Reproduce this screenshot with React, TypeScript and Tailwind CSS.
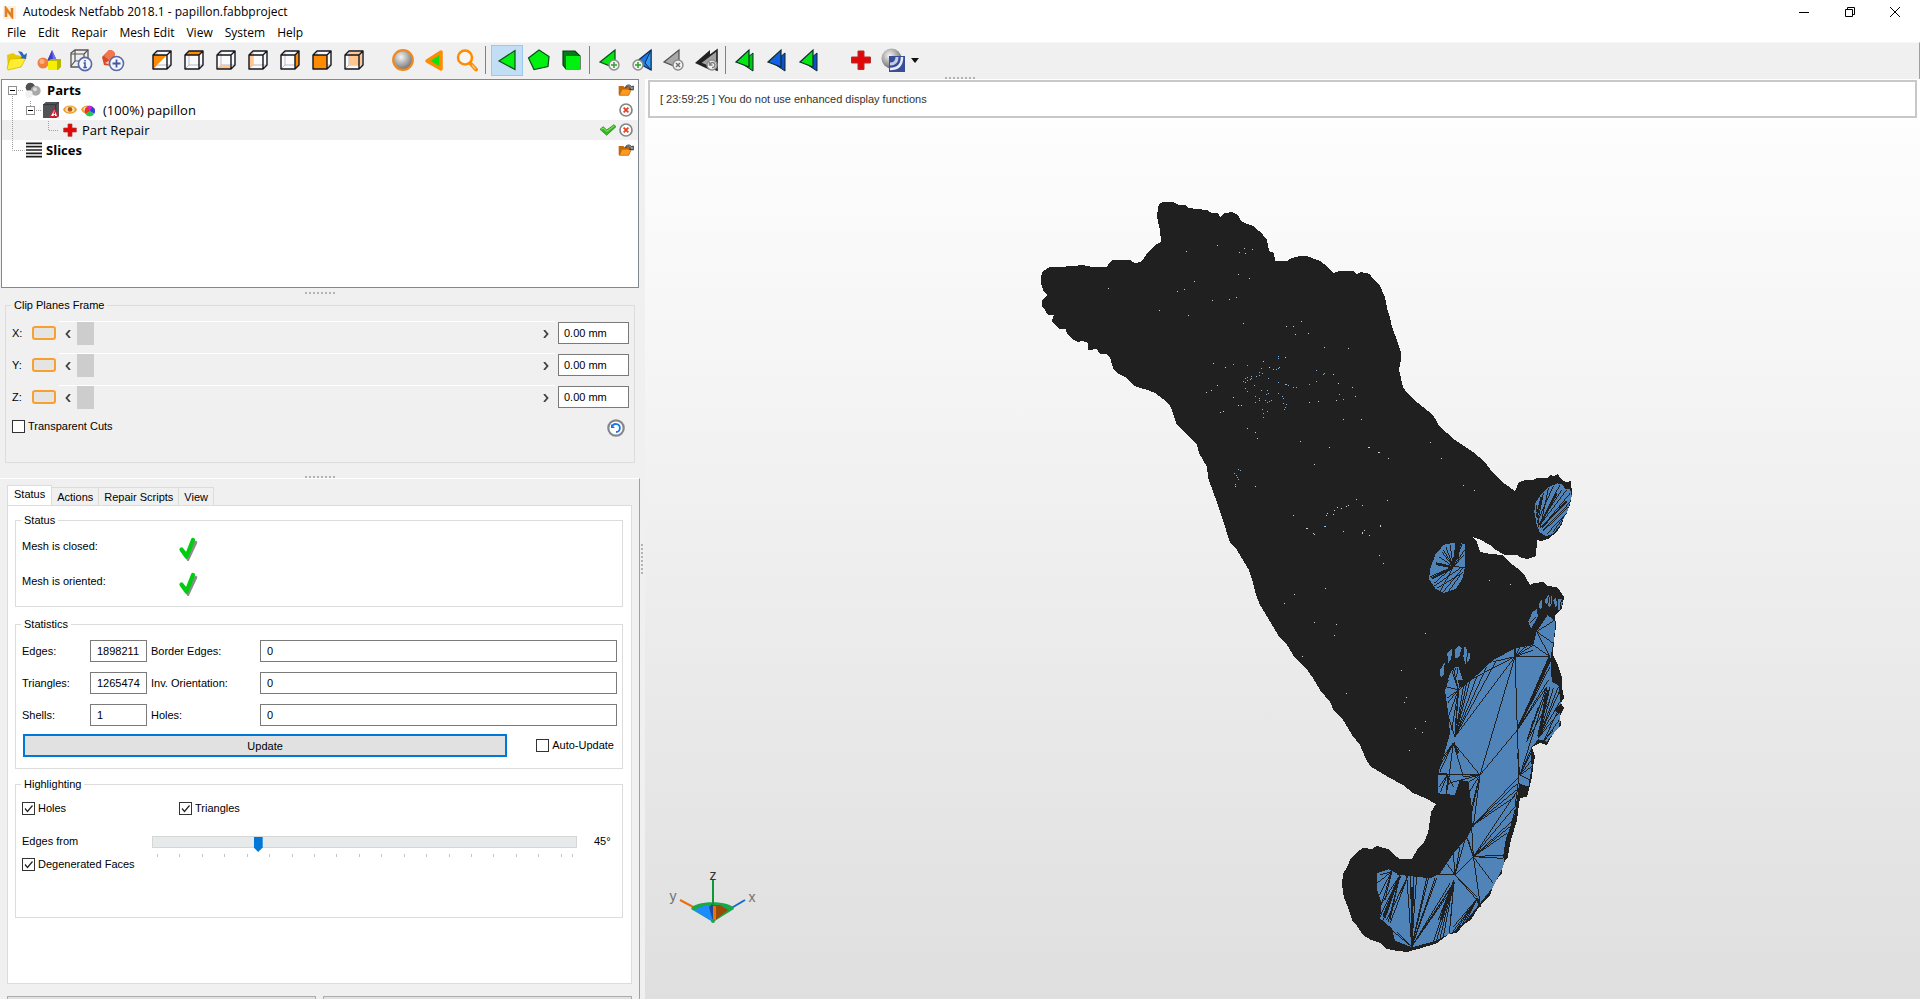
import { useState } from "react";
import type { ReactNode } from "react";

const ORANGE = "#ff8c00";
const INK = "#202020";

const menuItems = ["File", "Edit", "Repair", "Mesh Edit", "View", "System", "Help"];

const Icon = ({ children, className = "size-6" }: { children: ReactNode; className?: string }) => (
  <svg viewBox="0 0 24 24" className={className} fill="none" aria-hidden="true">
    {children}
  </svg>
);

/* ---------- toolbar icons ---------- */

const cubeFaces: Record<string, ReactNode> = {
  iso: <path d="M3 7h14L3 21z" fill={ORANGE} />,
  top: <path d="M3 7l4-4h14l-4 4z" fill={ORANGE} />,
  bottom: <path d="M3 21l4-4h10v4z" fill="#ffc78f" />,
  left: <path d="M3 7l4-3v13l-4 4z" fill="#ffc78f" />,
  right: <path d="M17 7l4-4v14l-4 4z" fill={ORANGE} />,
  front: <path d="M3 7h14v14H3z" fill={ORANGE} />,
  back: <path d="M7 4h13v13H7z" fill="#ffc78f" />,
};

const CubeIcon = ({ face }: { face: string }) => (
  <Icon>
    <path d="M3 7l4-4h14v14l-4 4H3z" fill="#fafafa" />
    <path d="M7 4v13h13M7 17l-4 4" stroke="#b9b9c4" strokeWidth="1" />
    {cubeFaces[face]}
    <path d="M3 7h14v14H3zM3 7l4-4h14v14l-4 4M17 7l4-4" stroke="#15151f" strokeWidth="1.4" strokeLinejoin="round" />
  </Icon>
);

const OpenIcon = () => (
  <Icon>
    <path d="M2 7l6-2 3 2 6 1v3l-2 8-12 2z" fill="#e8c800" />
    <path d="M2 20l3-9 16-1-5 9-13 3z" fill="#ffee30" stroke="#c9b000" strokeWidth=".7" />
    <path d="M13 3l4 1 2 3 3-2-1 6-6-1 2-1-2-3z" fill="#2c62c8" />
  </Icon>
);

const ShapesIcon = () => (
  <Icon>
    <path d="M15 2l5 11h-10z" fill="#3c3cc8" />
    <path d="M15 2l5 11h-4z" fill="#6f6ff0" />
    <circle cx="6" cy="15" r="5.5" fill="#f08040" />
    <circle cx="5" cy="13.5" r="2.5" fill="#ffb080" />
    <path d="M11 13l3-2h10v8l-3 3H11z" fill="#b8b400" />
    <path d="M11 13h9v9h-9z" fill="#f4f000" />
  </Icon>
);

const InfoIcon = () => (
  <Icon>
    <path d="M2 5l4-3h13v13l-3 4H2z" fill="#eeeeee" stroke="#555" strokeWidth="1.3" />
    <path d="M2 6h13v13M15 6l4-4M6 2v11l-4 5M6 13h12" stroke="#555" strokeWidth="1.2" />
    <circle cx="16" cy="16" r="6.6" fill="#f4f6ff" stroke="#5868a8" strokeWidth="1.6" />
    <path d="M16 12v1.6M14.5 15H16v4.5M14.3 19.5h3.6" stroke="#4656a0" strokeWidth="1.6" />
  </Icon>
);

const AddPartIcon = () => (
  <Icon>
    <path d="M1 9l7-7q5 0 6 4l-3 12-8-1z" fill="#d94a24" />
    <path d="M3 8l5-6q5 0 6 4l-5 7z" fill="#f0784c" />
    <path d="M4 15l5-3 3 6z" fill="#f8c0a0" />
    <circle cx="15.500" cy="15.500" r="7" fill="#f4f6ff" stroke="#5868a8" strokeWidth="1.6" />
    <path d="M15.500 11.500v8M11.500 15.500h8" stroke="#4656a0" strokeWidth="1.8" />
  </Icon>
);

const SphereIcon = () => (
  <Icon>
    <defs>
      <radialGradient id="ball" cx=".4" cy=".35" r=".7">
        <stop offset="0" stopColor="#f4f4f4" />
        <stop offset="1" stopColor="#686868" />
      </radialGradient>
    </defs>
    <circle cx="12" cy="12" r="9.800" fill="url(#ball)" stroke="#ef8a20" strokeWidth="2.200" />
  </Icon>
);

const OrangeTriangleIcon = () => (
  <Icon>
    <path d="M4 13L18 4v17z" fill="#10e010" stroke={ORANGE} strokeWidth="3.5" strokeLinejoin="round" />
  </Icon>
);

const MagnifierIcon = () => (
  <Icon>
    <circle cx="10" cy="9.500" r="7" fill="#f6f6f6" stroke={ORANGE} strokeWidth="2.500" />
    <path d="M15.500 15.500l5.500 6" stroke={ORANGE} strokeWidth="4" strokeLinecap="round" />
    <path d="M17 17l3.500 4" stroke="#ffc890" strokeWidth="1.200" />
  </Icon>
);

const TriangleIcon = () => (
  <Icon>
    <path d="M4 13L20 2.500v19z" fill="#00f010" stroke="#0b4d18" strokeWidth="1.200" />
  </Icon>
);

const PentagonIcon = () => (
  <Icon>
    <path d="M12 2l10 6.500-1 10L7 21.500 1.500 10z" fill="#00f010" stroke="#0b4d18" strokeWidth="1.200" />
  </Icon>
);

const SolidCubeIcon = () => (
  <Icon>
    <path d="M4 3l12 0 5 5v13H7L4 17z" fill="#067a18" stroke="#0b3d14" strokeWidth="1.200" />
    <path d="M7 8h14v13H7z" fill="#00f010" />
  </Icon>
);

const Badge = ({ x, color, mark }: { x: number; color: string; mark: string }) => (
  <>
    <circle cx={x} cy="17" r="5" fill="#f2f2f2" stroke="#8b8b8b" strokeWidth="1.400" />
    <path d={mark} stroke={color} strokeWidth="1.500" />
  </>
);

const AddTriangleIcon = () => (
  <Icon>
    <path d="M1 14L16 2v18z" fill="#00e810" stroke="#0b4d18" strokeWidth="1.200" />
    <Badge x={15} color="#30a030" mark="M15 14v6M12 17h6" />
  </Icon>
);

const AddBlueIcon = () => (
  <Icon>
    <path d="M5 14L20 2v20z" fill="#1a7ae0" stroke="#0a2a58" strokeWidth="1.200" />
    <path d="M20 2l-6 13 6 7z" fill="#2f9af0" stroke="#0a2a58" />
    <Badge x={7} color="#30a030" mark="M7 14v6M4 17h6" />
  </Icon>
);

const RemoveTriangleIcon = () => (
  <Icon>
    <path d="M1 14L16 2v18z" fill="#a8a8a8" stroke="#505050" strokeWidth="1.200" />
    <Badge x={15} color="#707070" mark="M13 15l4 4M17 15l-4 4" />
  </Icon>
);

const FlipIcon = () => (
  <Icon>
    <path d="M0 15L15 2v20z" fill="#222" />
    <path d="M5 15L22 2v20z" fill="#a0a0a0" stroke="#222" strokeWidth="1.600" />
    <Badge x={17} color="#808080" mark="M15 17a2.500 2.500 0 1 1 2 2.500M14.500 14v3h3" />
  </Icon>
);

const DoubleTriangleIcon = ({ front, back }: { front: string; back: string }) => (
  <Icon>
    <path d="M6 15L18 5v18z" fill={back} stroke="#123" strokeWidth="1" />
    <path d="M1 14L14 2v17z" fill={front} stroke="#0b2d28" strokeWidth="1.200" />
  </Icon>
);

const CrossIcon = ({ className = "size-6" }: { className?: string }) => (
  <Icon className={className}>
    <path d="M9 3h6v6h6.500v6H15v6.500H9V15H2.500V9H9z" fill="#e00808" stroke="#b03030" strokeWidth="1" />
  </Icon>
);

const DisplayIcon = () => (
  <Icon>
    <circle cx="10.500" cy="10.500" r="10" fill="url(#ball)" />
    <path d="M8 8h16v16H8z" fill="#3a4e98" />
    <path d="M9 21c8 0 12-4 12-12" stroke="#e6ecf8" strokeWidth="2.500" />
    <path d="M9 16c4 0 7-2 7-7" stroke="#c4cee8" strokeWidth="3" />
  </Icon>
);

/* ---------- tree icons ---------- */

const PartsIcon = () => (
  <Icon className="size-4">
    <circle cx="8" cy="8" r="7" fill="#505050" />
    <circle cx="16" cy="13" r="7.500" fill="#a8a8a8" />
    <circle cx="6" cy="18" r="5.500" fill="#f0f0f0" />
    <circle cx="15" cy="11" r="3" fill="#dcdcdc" />
  </Icon>
);

const PartIcon = () => (
  <Icon className="size-4">
    <path d="M0 4l4-4h20v20l-4 4H0z" fill="#505458" />
    <path d="M0 4h19v20M19 4l5-4" stroke="#33363a" strokeWidth="1.500" />
    <path d="M17 8l7 15H9z" fill="#d02030" />
    <path d="M17 12l4 9h-9z" fill="#fff" />
    <path d="M17 14v4M17 19v2" stroke="#d02030" strokeWidth="2" />
  </Icon>
);

const EyeIcon = ({ wheel = false }: { wheel?: boolean }) => (
  <Icon className="size-3.5">
    <path d="M0 11C4 2 20 2 24 11 20 21 4 21 0 11z" fill="#ef9a28" />
    <ellipse cx="12" cy="11" rx="8" ry="5" fill="#fbe0b0" />
    <circle cx="12" cy="11" r="4" fill="#b06010" />
    {wheel && (
      <>
        <path d="M15 14V5a9 9 0 0 1 7.800 13.500z" fill="#3040e8" />
        <path d="M15 14l7.800 4.500a9 9 0 0 1-15.600 0z" fill="#20c850" />
        <path d="M15 14L7.200 18.500A9 9 0 0 1 15 5z" fill="#f03020" />
        <path d="M15 14L10.500 6.200A9 9 0 0 1 19.500 6.200z" fill="#c828d0" />
      </>
    )}
  </Icon>
);

const SlicesIcon = () => (
  <Icon className="size-4">
    <path d="M0 2h24M0 7h24M0 12h24M0 17h24M0 22h24" stroke="#202020" strokeWidth="2.400" />
  </Icon>
);

const FolderIcon = () => (
  <Icon className="size-4">
    <path d="M1 6h7l2 2h8v3H6L3 19H1z" fill="#c06a10" />
    <path d="M2 20l4-9h14l-4 9z" fill="#ff9a20" stroke="#a85808" strokeWidth="1" />
    <path d="M11 8c2-5 8-4 9-1l3-1v6l-6-1 2-2c-2-2-5-2-7-1z" fill="#9d9d9d" stroke="#222" strokeWidth="1.200" />
  </Icon>
);

const RemoveIcon = () => (
  <Icon className="size-4">
    <circle cx="12" cy="12" r="9" fill="#fff" stroke="#848484" strokeWidth="2.500" />
    <path d="M8.500 8.500l7 7M15.500 8.500l-7 7" stroke="#e84020" strokeWidth="2.800" />
  </Icon>
);

const AcceptIcon = () => (
  <Icon className="size-4">
    <path d="M0 11l5-4 5 5L21 4l3 3-14 13z" fill="#35b820" stroke="#1f7a18" strokeWidth="1" />
    <path d="M2 11l3-2 5 5L21 6" stroke="#90e870" strokeWidth="1.500" />
  </Icon>
);

const StatusCheck = () => (
  <Icon className="mt-1.5 h-6 w-6">
    <path d="M6.500 14.500l4.500 7 7.500-16" stroke="#8c8c8c" strokeWidth="3.500" strokeLinecap="round" />
    <path d="M4.500 12.500l5 7L16 3" stroke="#00cc10" strokeWidth="4.200" strokeLinecap="round" strokeLinejoin="round" />
  </Icon>
);

/* ---------- small controls ---------- */

const Grip = ({ vertical = false }: { vertical?: boolean }) => (
  <span className={`flex gap-0.5 ${vertical ? "flex-col" : ""}`}>
    {[0, 1, 2, 3, 4, 5, 6, 7].map((dot) => (
      <i key={dot} className="size-0.5 bg-[#b4b4b4]" />
    ))}
  </span>
);

const Check = ({ label, checked = false }: { label: string; checked?: boolean }) => {
  const [on, setOn] = useState(checked);
  return (
    <label className="flex items-center gap-[3px] whitespace-nowrap">
      <span className="relative block size-[13px]">
        <input
          type="checkbox"
          checked={on}
          onChange={() => setOn(!on)}
          className="block size-[13px] appearance-none border border-[#333333] bg-white"
        />
        {on && (
          <svg viewBox="0 0 13 13" className="pointer-events-none absolute inset-0" fill="none">
            <path d="M3 6.500l2.500 3 5-6" stroke="#222" strokeWidth="1.200" />
          </svg>
        )}
      </span>
      {label}
    </label>
  );
};

const Group = ({ title, className, children }: { title: string; className: string; children: ReactNode }) => (
  <fieldset className={`border border-[#dcdcdc] ${className}`}>
    <legend className="ml-[5px] px-[3px] leading-[14px]">{title}</legend>
    {children}
  </fieldset>
);

const ToolButton = ({ label, active = false, children }: { label: string; active?: boolean; children: ReactNode }) => (
  <button
    aria-label={label}
    className={`flex h-[31px] w-8 items-center justify-center border ${
      active ? "border-[#99c9ef] bg-[#c2def4]" : "border-transparent"
    }`}
  >
    {children}
  </button>
);

const Separator = () => <span className="mx-0.5 h-7 w-px bg-[#808080]" />;

const Toolbar = () => (
  <div className="flex h-[37px] shrink-0 items-center border-t border-r border-t-[#f8f8f8] border-r-[#a0a0a0] bg-[#f0f0f0] pb-0.5 pl-px">
    <ToolButton label="Open"><OpenIcon /></ToolButton>
    <ToolButton label="Part library"><ShapesIcon /></ToolButton>
    <ToolButton label="Part info"><InfoIcon /></ToolButton>
    <ToolButton label="Add part"><AddPartIcon /></ToolButton>
    <div className="ml-[17px] flex">
      {Object.keys(cubeFaces).map((face) => (
        <ToolButton key={face} label={`View ${face}`}><CubeIcon face={face} /></ToolButton>
      ))}
    </div>
    <div className="ml-[17px] flex">
      <ToolButton label="Center"><SphereIcon /></ToolButton>
      <ToolButton label="Zoom to triangles"><OrangeTriangleIcon /></ToolButton>
      <ToolButton label="Zoom"><MagnifierIcon /></ToolButton>
    </div>
    <Separator />
    <div className="ml-[3px] flex">
      <ToolButton label="Select triangles" active><TriangleIcon /></ToolButton>
      <ToolButton label="Select surface"><PentagonIcon /></ToolButton>
      <ToolButton label="Select shell"><SolidCubeIcon /></ToolButton>
    </div>
    <Separator />
    <div className="ml-[3px] flex">
      <ToolButton label="Add triangle"><AddTriangleIcon /></ToolButton>
      <ToolButton label="Add node"><AddBlueIcon /></ToolButton>
      <ToolButton label="Remove triangle"><RemoveTriangleIcon /></ToolButton>
      <ToolButton label="Flip triangles"><FlipIcon /></ToolButton>
    </div>
    <Separator />
    <div className="ml-[3px] flex">
      <ToolButton label="Front faces"><DoubleTriangleIcon front="#00e810" back="#00c810" /></ToolButton>
      <ToolButton label="Back faces"><DoubleTriangleIcon front="#1060e8" back="#1050c8" /></ToolButton>
      <ToolButton label="Both faces"><DoubleTriangleIcon front="#00e810" back="#1050c8" /></ToolButton>
    </div>
    <div className="ml-[18px] flex items-center">
      <ToolButton label="Repair"><CrossIcon /></ToolButton>
      <ToolButton label="Display mode"><DisplayIcon /></ToolButton>
      <button aria-label="More display modes" className="ml-0.5">
        <svg viewBox="0 0 8 5" className="h-[5px] w-2"><path d="M0 0h8L4 5z" fill="#111" /></svg>
      </button>
    </div>
  </div>
);

/* ---------- left side ---------- */

const Expander = ({ label }: { label: string }) => (
  <button aria-label={label} className="flex size-[9px] items-center justify-center border border-[#909090] bg-white">
    <i className="h-px w-[5px] bg-black" />
  </button>
);

const IconButton = ({ label, children }: { label: string; children: ReactNode }) => (
  <button aria-label={label} className="block">{children}</button>
);

const Tree = () => (
  <div className="relative mr-px ml-px h-[209px] shrink-0 border border-[#828790] bg-white font-['Open_Sans','Noto_Sans',sans-serif] text-[13px]">
    <svg className="pointer-events-none absolute top-0 left-0 h-24 w-20" fill="none" stroke="#a0a0a0" strokeDasharray="1 1">
      <path d="M10.500 14v56.500h12M16 10.500h6M28.500 21v5M34 30.500h6M46.500 41v9.500h10" />
    </svg>
    <div className="flex h-5 items-center pr-1 pl-1.5">
      <Expander label="Collapse parts" />
      <span className="ml-2"><PartsIcon /></span>
      <span className="ml-1.5 flex-1 font-bold">Parts</span>
      <IconButton label="Open parts"><FolderIcon /></IconButton>
    </div>
    <div className="flex h-5 items-center pr-1 pl-6">
      <Expander label="Collapse papillon" />
      <span className="ml-2"><PartIcon /></span>
      <span className="ml-1"><EyeIcon /></span>
      <span className="ml-1"><EyeIcon wheel /></span>
      <span className="ml-2 flex-1">(100%) papillon</span>
      <IconButton label="Remove papillon"><RemoveIcon /></IconButton>
    </div>
    <div className="flex h-5 items-center bg-[#f0f0f0] pr-1 pl-[60px]">
      <CrossIcon className="size-4" />
      <span className="ml-1 flex-1">Part Repair</span>
      <IconButton label="Apply repair"><AcceptIcon /></IconButton>
      <span className="w-0.5" />
      <IconButton label="Cancel repair"><RemoveIcon /></IconButton>
    </div>
    <div className="flex h-5 items-center pr-1 pl-6">
      <SlicesIcon />
      <span className="ml-1 flex-1 font-bold">Slices</span>
      <IconButton label="Open slices"><FolderIcon /></IconButton>
    </div>
  </div>
);

const ClipRow = ({ axis }: { axis: string }) => {
  const [value, setValue] = useState(0);
  return (
    <div className="flex h-8 items-center">
      <span className="w-5">{axis}:</span>
      <button aria-label={`Clip ${axis}`} className="mr-[3px] h-3.5 w-6 rounded-[3px] border-2 border-[#f7a030] bg-[#e4e4e4]" />
      <div className="mr-[3px] flex h-6 flex-1 items-center border-t border-white">
        <button aria-label={`Decrease ${axis}`} className="flex w-[18px] justify-center">
          <svg viewBox="0 0 6 8" className="h-2 w-1.5" fill="none"><path d="M5 0L1.500 4 5 8" stroke="#404040" strokeWidth="1.800" /></svg>
        </button>
        <input
          type="range"
          aria-label={`${axis} plane`}
          value={value}
          onChange={(e) => setValue(Number(e.target.value))}
          className="h-[23px] min-w-0 flex-1 appearance-none bg-transparent [&::-webkit-slider-thumb]:h-[23px] [&::-webkit-slider-thumb]:w-[17px] [&::-webkit-slider-thumb]:appearance-none [&::-webkit-slider-thumb]:bg-[#cdcdcd]"
        />
        <button aria-label={`Increase ${axis}`} className="flex w-[17px] justify-center">
          <svg viewBox="0 0 6 8" className="h-2 w-1.5" fill="none"><path d="M1 0l3.500 4L1 8" stroke="#404040" strokeWidth="1.800" /></svg>
        </button>
      </div>
      <input
        aria-label={`${axis} position`}
        defaultValue="0.00 mm"
        className="h-[22px] w-[71px] border border-[#7a7a7a] bg-white px-[5px]"
      />
    </div>
  );
};

const ClipPlanes = () => (
  <Group title="Clip Planes Frame" className="mr-[5px] ml-[5px] h-[165px] shrink-0">
    <div className="pt-[5px] pr-[5px] pl-1.5">
      {["X", "Y", "Z"].map((axis) => (
        <ClipRow key={axis} axis={axis} />
      ))}
      <div className="flex h-[26px] items-center justify-between pr-1">
        <Check label="Transparent Cuts" />
        <button aria-label="Reset planes" className="mt-1">
          <svg viewBox="0 0 18 18" className="size-[18px]" fill="none">
            <circle cx="9" cy="9" r="7.700" fill="#fff" stroke="#85878c" strokeWidth="2.200" />
            <path d="M5 8a4 4 0 1 1 4 5" stroke="#1878e8" strokeWidth="1.800" />
            <path d="M4 5v4h4z" fill="#1878e8" />
          </svg>
        </button>
      </div>
    </div>
  </Group>
);

const stats = [
  ["Edges:", "1898211", "Border Edges:"],
  ["Triangles:", "1265474", "Inv. Orientation:"],
  ["Shells:", "1", "Holes:"],
];

const ticks = [0, 10, 20, 30, 40, 50, 60, 70, 80, 90, 100, 110, 120, 130, 140, 150, 160, 170, 180, 185];

const tabs = ["Status", "Actions", "Repair Scripts", "View"];

const RepairPanel = () => {
  const [angle, setAngle] = useState(45);
  return (
    <div className="flex min-h-0 flex-1 flex-col border-t border-r border-t-white border-r-[#a0a0a0] pt-1.5 pr-[7px] pl-[7px]">
      <div className="flex h-5 shrink-0 items-end" role="tablist">
        {tabs.map((tab, i) => (
          <button
            key={tab}
            role="tab"
            aria-selected={i === 0}
            className={
              i === 0
                ? "h-5 border border-b-0 border-[#dcdcdc] bg-white px-1.5 pb-1"
                : "h-[18px] border border-b-0 border-l-0 border-[#dcdcdc] px-[5px]"
            }
          >
            {tab}
          </button>
        ))}
      </div>
      <div className="h-[479px] shrink-0 border border-[#dcdcdc] bg-white pt-[7px] pr-2 pl-[7px]">
        <Group title="Status" className="h-[94px]">
          <div className="pt-px">
            {["Mesh is closed:", "Mesh is oriented:"].map((text) => (
              <div key={text} className="flex h-[35px] items-center pl-1.5">
                <span className="w-[155px]">{text}</span>
                <StatusCheck />
              </div>
            ))}
          </div>
        </Group>
        <Group title="Statistics" className="mt-[10px] h-[152px]">
          <div className="pt-1 pr-[5px] pl-1.5">
            {stats.map(([name, amount, other]) => (
              <div key={name} className="flex h-8 items-center">
                <label htmlFor={name} className="w-[68px]">{name}</label>
                <input id={name} readOnly value={amount} className="h-[22px] w-[57px] border border-[#7a7a7a] px-1.5" />
                <label htmlFor={other} className="ml-1 w-[109px]">{other}</label>
                <input id={other} readOnly value="0" className="h-[22px] min-w-0 flex-1 border border-[#7a7a7a] px-1.5" />
              </div>
            ))}
            <div className="mt-[3px] flex items-start justify-between pr-[3px]">
              <button className="mr-[29px] ml-px h-[23px] flex-1 border-2 border-[#0078d7] bg-[#e1e1e1]">Update</button>
              <div className="mt-1"><Check label="Auto-Update" /></div>
            </div>
          </div>
        </Group>
        <Group title="Highlighting" className="mt-2 h-[141px]">
          <div className="pt-[7px] pr-[5px] pl-1.5">
            <div className="flex h-5 items-center">
              <span className="w-[157px]"><Check label="Holes" checked /></span>
              <Check label="Triangles" checked />
            </div>
            <div className="mt-3 flex">
              <label htmlFor="angle" className="mt-1 w-[130px]">Edges from</label>
              <div className="min-w-0 flex-1 pt-1.5">
                <div className="flex h-3 items-start border border-[#d6d6d6] bg-[#e7eaea]">
                  <input
                    id="angle"
                    type="range"
                    min={0}
                    max={185}
                    value={angle}
                    onChange={(e) => setAngle(Number(e.target.value))}
                    className="h-[15px] w-full appearance-none bg-transparent [&::-webkit-slider-thumb]:h-[15px] [&::-webkit-slider-thumb]:w-[9px] [&::-webkit-slider-thumb]:appearance-none [&::-webkit-slider-thumb]:bg-[#0078d7] [&::-webkit-slider-thumb]:[clip-path:polygon(0_0,100%_0,100%_70%,50%_100%,0_70%)]"
                  />
                </div>
                <div className="relative mx-[5px] mt-1.5 h-[3px]">
                  {ticks.map((tick) => (
                    <i key={tick} className="absolute top-0 h-[3px] w-px bg-[#c4c4c4]" style={{ left: `${(tick / 185) * 100}%` }} />
                  ))}
                </div>
              </div>
              <output className="mt-1 w-10 pl-[17px]">{angle}°</output>
            </div>
            <div><Check label="Degenerated Faces" checked /></div>
          </div>
        </Group>
      </div>
      <div className="mt-3 flex shrink-0 gap-[7px]">
        <button aria-label="Automatic repair" className="h-6 flex-1 border border-[#adadad] bg-[#e1e1e1]" />
        <button aria-label="Apply" className="h-6 flex-1 border border-[#adadad] bg-[#e1e1e1]" />
      </div>
    </div>
  );
};

/* ---------- 3D view ---------- */

const outline =
  "1158,207 1160,203 1164,202 1173,202 1179,205 1185,205 1189,208 1196,209 1207,210 1212,213 1218,213 1220,217 1225,213 1232,212 1238,215 1241,221 1247,224 1253,226 1259,231 1263,235 1267,240 1269,251 1274,253 1275,261 1287,261 1292,258 1300,256 1307,256 1320,261 1327,266 1333,273 1340,271 1353,271 1357,274 1361,272 1370,274 1373,279 1380,286 1385,297 1387,308 1390,317 1392,327 1397,340 1401,353 1401,360 1399,370 1403,387 1407,393 1413,399 1423,407 1433,415 1437,422 1440,427 1447,433 1455,440 1464,446 1473,452 1485,462 1490,469 1497,477 1505,484 1515,491 1519,482 1525,480 1533,480 1537,478 1547,478 1550,475 1554,476 1558,474 1561,479 1566,482 1571,481 1572,495 1570,505 1565,515 1562,524 1558,530 1553,535 1548,539 1541,541 1537,540 1536,556 1528,559 1522,558 1517,555 1505,555 1496,550 1490,545 1481,540 1473,537 1477,542 1480,552 1490,554 1503,555 1508,561 1517,568 1525,576 1530,585 1534,583 1543,582 1548,586 1556,587 1560,591 1564,597 1562,608 1555,615 1556,627 1554,640 1553,655 1557,663 1562,677 1562,687 1564,698 1561,703 1564,708 1560,716 1561,726 1554,732 1547,745 1540,743 1532,747 1535,757 1533,767 1532,777 1527,797 1520,798 1518,812 1517,820 1514,830 1511,840 1509,850 1508,857 1503,864 1502,873 1495,882 1490,895 1484,901 1477,910 1471,920 1464,924 1457,933 1449,934 1437,943 1428,946 1418,949 1407,952 1398,951 1387,949 1380,943 1371,940 1363,935 1357,926 1352,920 1348,907 1344,898 1342,885 1343,874 1347,867 1351,858 1357,852 1363,848 1372,849 1377,846 1388,849 1394,855 1400,859 1412,859 1417,850 1424,842 1428,833 1430,820 1431,812 1436,804 1425,798 1413,793 1403,785 1390,778 1378,771 1370,766 1365,757 1360,745 1352,735 1345,723 1341,717 1334,711 1330,702 1320,690 1313,678 1305,667 1295,658 1287,645 1278,635 1268,618 1260,605 1256,595 1253,583 1249,570 1243,560 1237,550 1230,542 1226,530 1223,520 1219,508 1215,497 1211,486 1208,477 1207,467 1199,453 1197,445 1190,438 1185,432 1177,425 1172,410 1169,404 1163,399 1155,393 1148,390 1140,388 1133,385 1127,378 1117,373 1113,368 1110,357 1106,354 1100,354 1097,349 1088,350 1088,343 1082,341 1078,342 1072,339 1067,334 1066,329 1060,329 1053,323 1052,320 1054,315 1048,315 1045,310 1042,307 1042,301 1047,295 1043,290 1041,283 1041,276 1043,271 1050,267 1060,267 1072,266 1083,265 1092,267 1107,267 1110,262 1113,260 1120,260 1130,260 1135,263 1141,262 1149,251 1155,245 1161,242 1160,230 1157,217";

// gaps in the wireframe, in 1/3 px units from the top-left of the head
const headSpecks: [number, number][] = [
  [265, 326], [418, 391], [504, 407], [497, 214], [592, 196], [657, 219], [671, 206], [676, 220], [695, 208],
  [653, 284], [686, 297], [521, 304], [472, 334], [493, 328], [577, 361], [628, 358], [649, 352], [668, 431],
  [799, 440], [820, 439], [844, 425], [826, 463], [865, 460], [911, 502], [983, 505], [580, 550], [616, 562],
  [794, 532], [728, 544], [746, 562], [592, 617], [574, 631], [559, 638], [640, 652], [653, 676], [662, 676],
  [599, 699], [608, 694], [682, 745], [706, 757], [712, 777], [841, 784], [926, 802], [883, 853], [1046, 802],
  [1076, 817], [1103, 835], [1229, 787], [970, 720], [1022, 718], [997, 622], [1004, 649], [940, 583], [953, 610],
  [868, 667], [895, 664], [947, 661], [706, 921], [646, 921], [820, 1006], [859, 1045], [880, 1062], [970, 1054],
  [1081, 1038], [1025, 1059], [1031, 1051], [1046, 1066], [917, 1006], [922, 1000], [940, 1004], [941, 993],
  [952, 982], [964, 986], [977, 981], [985, 976], [1007, 958], [1027, 977], [1100, 961], [1045, 802], [1075, 817],
  [1264, 835], [1329, 916], [1363, 931],
];

const blueSpecks: [number, number][] = [
  [775, 529], [775, 536], [638, 553], [682, 558], [722, 566], [718, 577], [727, 580], [716, 586], [709, 589],
  [694, 590], [694, 596], [682, 592], [676, 597], [682, 602], [670, 604], [676, 608], [689, 598], [758, 568],
  [767, 570], [773, 566], [778, 562], [743, 595], [703, 616], [676, 626], [682, 634], [722, 631], [740, 632],
  [773, 607], [794, 613], [799, 614], [805, 616], [820, 622], [829, 622], [868, 613], [889, 604], [889, 571],
  [913, 580], [910, 584], [704, 649], [716, 656], [718, 662], [706, 668], [737, 643], [745, 640], [735, 663],
  [740, 667], [748, 665], [754, 663], [773, 640], [787, 650], [790, 656], [788, 672], [797, 674], [794, 682],
  [792, 688], [727, 688], [740, 694], [728, 700], [728, 712], [956, 643], [970, 658], [655, 869], [661, 873],
  [643, 880], [649, 886], [652, 893], [655, 898], [644, 915], [913, 1039],
];

const bodySpecks: [number, number][] = [
  [320, 26], [341, 43], [374, 19], [430, 34], [485, 40], [491, 31], [506, 46], [541, 19], [538, 106], [550, 130],
  [376, 205], [283, 223], [251, 250], [343, 307], [409, 314], [403, 347], [307, 409], [439, 522], [676, 341],
  [604, 451], [619, 533], [611, 547], [676, 605], [646, 626], [667, 637], [627, 691], [868, 181], [931, 193],
];

const Specks = ({ points, color }: { points: [number, number][]; color: string }) => (
  <path d={points.map(([x, y]) => `M${x} ${y}h3`).join("")} stroke={color} strokeWidth="3" />
);

const fan = (x: number, y: number, ends: [number, number][]) => ends.map(([a, b]) => `M${x} ${y}L${a} ${b}`).join("");

const tailMesh = [
  "M585 85L585 110L592 330L597 470L585 560M585 110L690 110M705 0L650 35L700 70M650 35L690 110M640 75L690 110",
  fan(585, 110, [[480, 465], [405, 350], [620, 78], [640, 75], [520, 125], [460, 175], [600, 80], [640, 90]]),
  fan(592, 330, [[690, 110], [694, 118], [686, 112], [690, 140], [480, 465], [680, 200], [685, 180]]),
  fan(405, 350, [[470, 170], [440, 190], [450, 182], [530, 120], [430, 200], [500, 140], [415, 220], [385, 290]]),
  fan(415, 210, [[395, 150], [378, 200], [382, 250], [380, 235], [385, 290], [405, 330], [395, 330], [425, 180], [435, 195], [400, 145]]),
  fan(400, 368, [[480, 465], [430, 470], [382, 510], [358, 440], [360, 455], [370, 410], [380, 400]]),
  fan(480, 465, [[350, 462], [430, 470], [440, 490], [445, 520], [460, 620], [385, 490], [450, 600], [455, 560]]),
  fan(382, 465, [[380, 525], [358, 500], [362, 515], [400, 500]]),
  fan(460, 615, [[597, 470], [590, 510], [585, 530], [592, 490]]),
  fan(460, 710, [[440, 650], [590, 515], [585, 560], [580, 600], [560, 640], [550, 715], [550, 705], [520, 790], [480, 850], [445, 660], [455, 620], [570, 620], [405, 765]]),
  fan(405, 765, [[480, 850], [470, 830], [350, 765], [380, 730], [400, 700], [420, 680], [435, 660]]),
  fan(275, 980, [[260, 765], [272, 765], [280, 765], [290, 765], [320, 775], [325, 775], [345, 775], [350, 775], [390, 790], [215, 930], [395, 800], [400, 790], [380, 830], [230, 935]]),
  fan(402, 780, [[340, 965], [350, 960], [360, 955], [370, 950], [388, 940], [355, 900], [362, 880], [392, 900]]),
  fan(470, 838, [[395, 940], [405, 935], [420, 925], [440, 900], [430, 905], [400, 920]]),
  fan(215, 755, [[175, 830], [170, 790], [180, 765], [195, 840], [185, 850]]),
  fan(240, 765, [[185, 850], [180, 890], [190, 900], [205, 905], [195, 895], [210, 900], [230, 765]]),
  fan(265, 765, [[210, 910], [200, 900], [240, 820]]),
  fan(655, 355, [[690, 200], [715, 200], [718, 215], [720, 245], [715, 280], [680, 205], [700, 205]]),
  fan(600, 465, [[632, 390], [635, 420], [635, 440], [632, 400], [630, 480], [592, 400], [680, 210]]),
  fan(620, 365, [[640, 300], [680, 200], [655, 260], [690, 240]]),
  fan(670, 365, [[715, 270], [705, 290], [718, 300], [700, 330]]),
  fan(550, 715, [[585, 570], [575, 610], [570, 640], [560, 650]]),
].join("");

const Viewport = () => (
  <svg
    viewBox="645 79 1275 920"
    preserveAspectRatio="xMidYMid meet"
    className="absolute inset-0 h-full w-full"
    fill="none"
    shapeRendering="crispEdges"
    role="img"
    aria-label="papillon mesh"
  >
    <polygon points={outline} fill={INK} />
    <g transform="translate(1020 180) scale(0.333333)">
      <Specks points={headSpecks} color="#c4d2d2" />
      <Specks points={blueSpecks} color="#7fb0dc" />
    </g>
    <g transform="translate(1200 520) scale(0.333333)">
      <Specks points={bodySpecks} color="#c8d4d4" />
    </g>
    {/* paws */}
    <g transform="translate(1340 440) scale(0.333333)">
      <path d="M652 130L668 134 675 148 690 148 695 168 682 215 660 255 638 282 618 288 600 278 590 255 583 215 586 190 605 160 625 142z" fill="#5084b8" />
      <path
        d="M595 260L660 134M600 265L625 145M597 255L588 195M590 250L640 138M605 262L690 160M600 255L680 150M610 270L692 185M608 275L685 200M620 282L680 220M600 250L665 150M595 235L610 160M640 275L675 225"
        stroke={INK}
        strokeWidth="3"
      />
      <path d="M598 256L650 160M604 262L680 185M590 230L605 170" stroke={INK} strokeWidth="6" />
      <path d="M345 308v50l10 0 8-48 12 2v70l-8 35-20 30-35 12-25-12-20-30 5-35 15-40 25-28z" fill="#5084b8" />
      <path
        d="M340 380L330 315M340 380L318 322M340 380L305 335M340 380L296 350M340 380L288 368M340 380L375 382M340 380L372 345M340 380L366 312M340 380L270 410M340 380L282 430M340 380L300 455M368 385L310 455M368 395L325 455M340 380L374 330M366 400L290 445M340 380L310 330M360 385L280 440"
        stroke={INK}
        strokeWidth="3"
      />
      <path d="M340 380L350 310M340 382L288 372M335 385L275 415" stroke={INK} strokeWidth="7" />
      <path
        d="M565 545l12-28 14-10 2 22-10 20-10 16zM597 490l10-14v24l-8 10zM614 480l12-16 10 6v24l-8 6-10-8zM640 480l8-6 4 20-6 8zM655 478l10-2 3 12-8 24-6-4zM322 640l14-14-2 30-10 14zM345 630l12-12 8 6-8 28-12 4zM370 650l4-32 6 10 2 12 8 0-2 22-12 12zM300 690l14-22-2 36-10 10zM330 700l14-18 12 0 12 38h-44z"
        fill="#5084b8"
      />
      <path d="M570 550l20-20M622 500l6-36M634 498l-4-30M335 720l12-36M350 720l2-36M380 670l2-40M660 510l4-30" stroke={INK} strokeWidth="3" />
    </g>
    {/* belly and tail */}
    <g transform="translate(1320 620) scale(0.333333)">
      <path
        d="M683-15L706 5 702 60 692 110 695 185 715 195 722 250 702 272 720 280 718 320 680 365 655 358 632 385 635 440 625 500 598 490 590 540 585 580 560 650 550 740 520 800 480 850 440 900 400 935 340 965 275 982 225 962 215 925 180 895 185 850 172 810 170 760 205 748 240 765 330 775 360 760 400 700 440 655 458 620 455 560 445 485 420 480 405 525 355 520 355 460 370 410 390 340 385 280 375 210 400 145 420 200 430 200 460 175 520 120 585 85 640 75 650 35Z"
        fill="#5084b8"
      />
      <path d={tailMesh} stroke={INK} strokeWidth="3" />
      <path
        d="M692 115L594 325M402 785L362 900M585 85v30M240 768L190 890M655 350L685 210M275 980L278 800M400 368L415 400M470 835L482 860M350 462h30"
        stroke={INK}
        strokeWidth="7"
      />
    </g>
    {/* axis gizmo */}
    <g shapeRendering="auto">
      <path d="M680 900L697 909" stroke="#e87010" strokeWidth="2" />
      <path d="M745 900L728 910" stroke="#1868c8" strokeWidth="2" />
      <path d="M691 909c2-9 41-9 43 0l-21 13z" fill="#18a848" />
      <path d="M694 910l10-4 9-1v17z" fill="#1e8cff" />
      <path d="M713 922l-4-15 3-3 6 3z" fill="#1a4c9c" />
      <path d="M713 905l7 0 8 5-15 12z" fill="#9a4a08" />
      <path d="M713 922v-16h3v14z" fill="#f07010" />
      <path d="M713 880v25" stroke="#109838" strokeWidth="2" />
      <circle cx="713" cy="921" r="2" fill="#18a848" />
      <g className="font-['Liberation_Sans',Arial,sans-serif] text-[14px]" textAnchor="middle" fill="#707070">
        <text x="713" y="880" fill="#333">z</text>
        <text x="673" y="901">y</text>
        <text x="752" y="902">x</text>
      </g>
    </g>
  </svg>
);

const TitleBar = () => (
  <div className="flex h-6 shrink-0 items-center pl-[3px]">
    <svg viewBox="0 0 13 13" className="size-[13px]" fill="none">
      <path d="M0 0h13v13H0z" fill="#fdeedd" />
      <path d="M3 11V2.500l6 8V2" stroke="#e08020" strokeWidth="2.600" />
    </svg>
    <h1 className="ml-[7px] flex-1">Autodesk Netfabb 2018.1 - papillon.fabbproject</h1>
    <div className="flex">
      <button aria-label="Minimize" className="flex h-5 w-[46px] items-center justify-center">
        <svg viewBox="0 0 10 10" className="size-2.5"><path d="M0 5.500h10" stroke="#000" /></svg>
      </button>
      <button aria-label="Restore" className="flex h-5 w-[45px] items-center justify-center">
        <svg viewBox="0 0 10 10" className="size-2.5" fill="none"><path d="M.5 2.500h7v7h-7zM2.500 2V.5h7v7H8" stroke="#000" /></svg>
      </button>
      <button aria-label="Close" className="mr-0.5 flex h-5 w-[46px] items-center justify-center">
        <svg viewBox="0 0 10 10" className="size-2.5"><path d="M0 0l10 10M10 0L0 10" stroke="#000" /></svg>
      </button>
    </div>
  </div>
);

const App: React.FC = () => (
  <div className="flex h-screen flex-col overflow-hidden bg-[#f0f0f0] font-['Liberation_Sans',Arial,sans-serif] text-[11px] leading-[14px] text-black">
    <header className="shrink-0 bg-white font-['Open_Sans','Noto_Sans',sans-serif] text-[12px]">
      <TitleBar />
      <nav className="flex h-[18px] items-center gap-3 pl-[7px]">
        {menuItems.map((item) => (
          <button key={item}>{item}</button>
        ))}
      </nav>
    </header>
    <div className="relative">
      <Toolbar />
      <div className="absolute bottom-0 left-1/2 -translate-x-1/2"><Grip /></div>
    </div>
    <main className="flex min-h-0 flex-1">
      <aside className="flex w-1/3 shrink-0 flex-col">
        <Tree />
        <div className="flex h-[10px] shrink-0 items-center justify-center"><Grip /></div>
        <ClipPlanes />
        <div className="flex h-[15px] shrink-0 items-end justify-center"><Grip /></div>
        <RepairPanel />
      </aside>
      <div className="flex w-[5px] shrink-0 items-center justify-center pt-10"><Grip vertical /></div>
      <section className="relative min-w-0 flex-1 bg-linear-to-b from-white to-[#dfdfdf]">
        <Viewport />
        <div className="relative mt-px mr-[3px] ml-[3px] h-[38px] border-2 border-[#c8c8c8] bg-white px-2.5 py-2.5 text-[#333333]">
          [ 23:59:25 ] You do not use enhanced display functions
        </div>
      </section>
    </main>
  </div>
);

export default App;
